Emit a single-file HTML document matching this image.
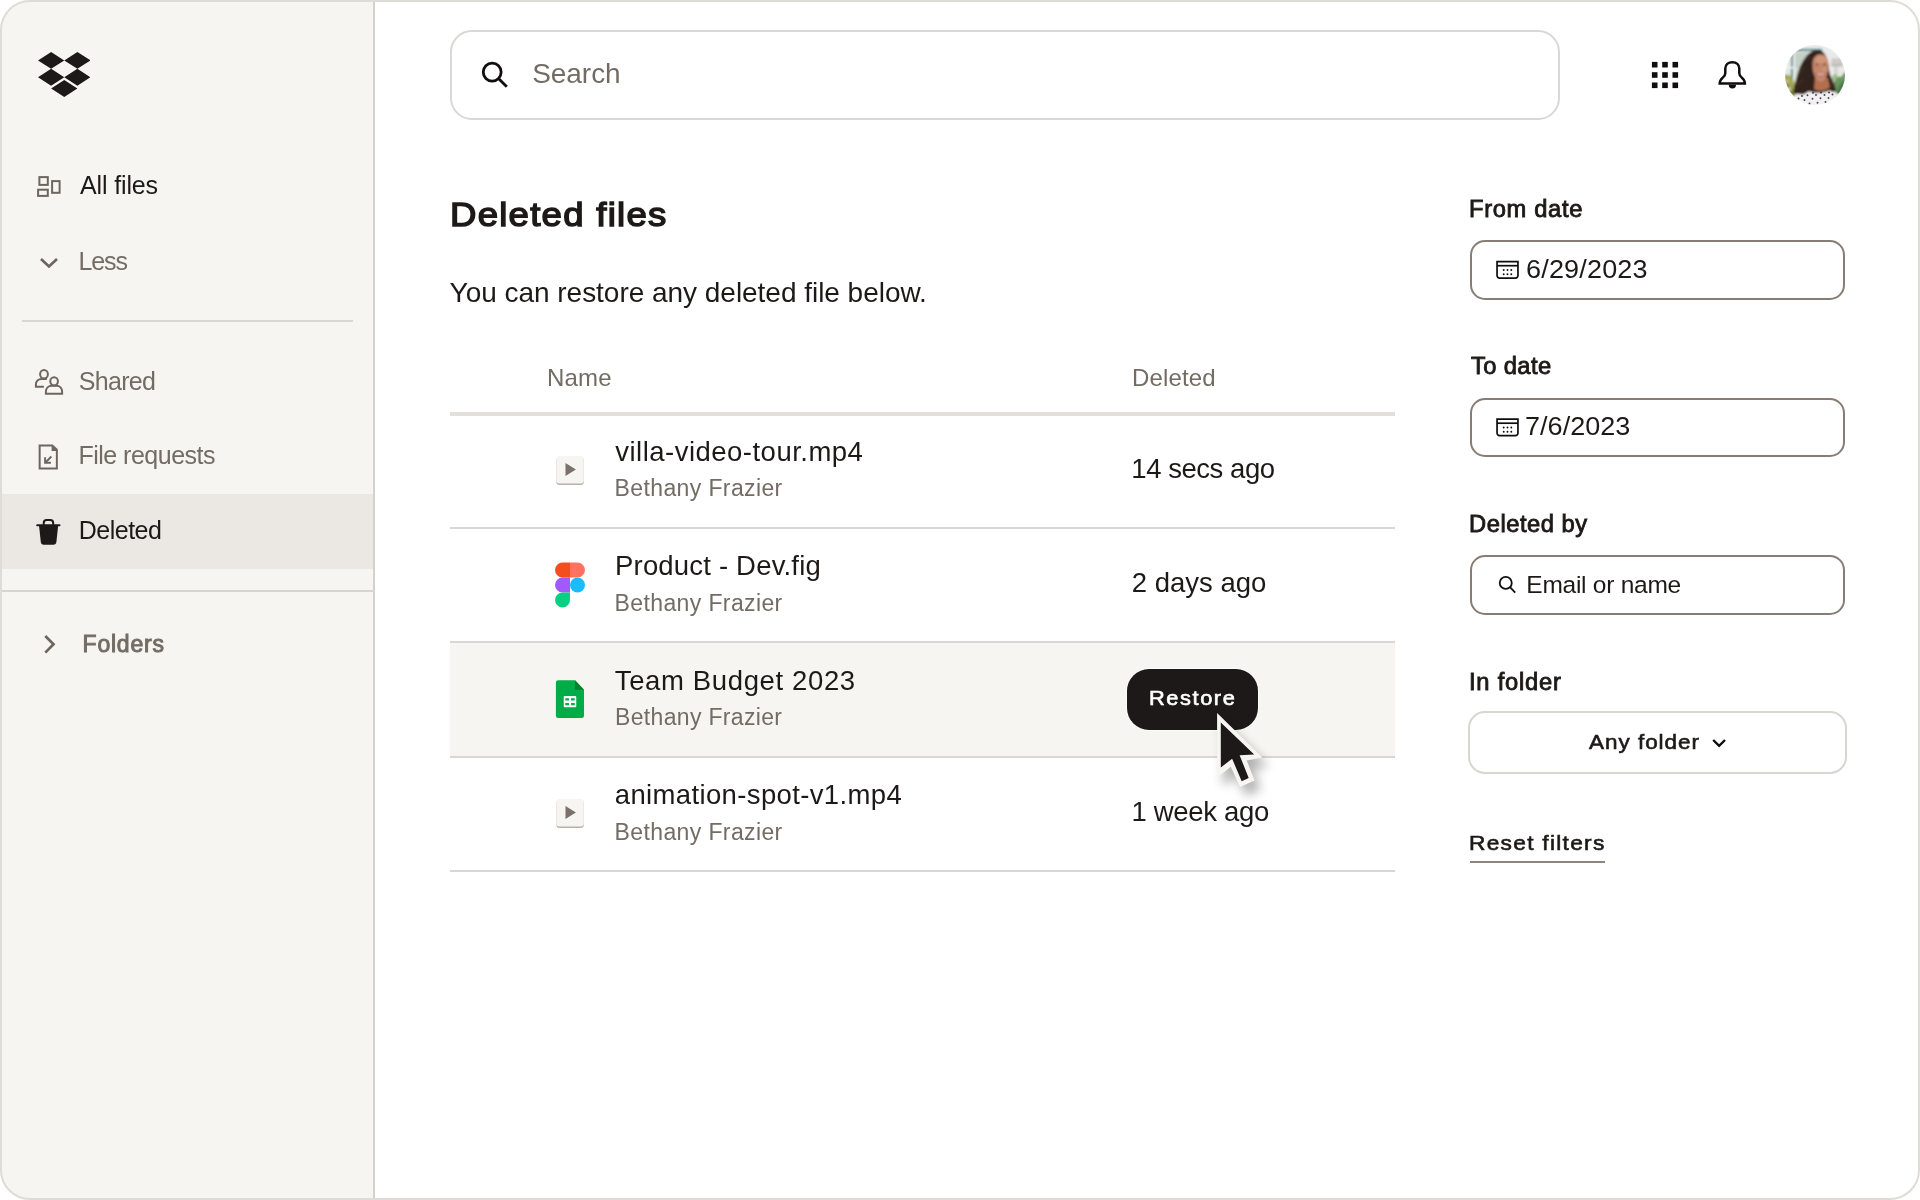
<!DOCTYPE html>
<html lang="en">
<head>
<meta charset="utf-8">
<title>Deleted files</title>
<style>
  html, body { margin: 0; padding: 0; }
  body {
    width: 1920px; height: 1200px; overflow: hidden; background: #ffffff;
    font-family: "Liberation Sans", sans-serif; color: #1e1919;
    -webkit-font-smoothing: antialiased;
  }
  .app {
    position: absolute; left: 0; top: 0; width: 1920px; height: 1200px;
    border-radius: 30px; overflow: hidden; background: #ffffff;
    will-change: transform; /* composited layer -> grayscale text AA */
  }
  .frame {
    position: absolute; left: 0; top: 0; width: 1920px; height: 1200px;
    box-sizing: border-box; border: 2px solid #dfdcd8; border-radius: 30px;
    pointer-events: none; z-index: 50;
  }
  .abs { position: absolute; }
  .t { position: absolute; white-space: nowrap; line-height: 1; margin: 0; padding: 0; }
  .gray { color: #736c64; }
  .b { font-weight: bold; }
  .m { font-weight: normal; -webkit-text-stroke: 0.62px currentColor; }

  /* ---------- sidebar ---------- */
  .sidebar {
    position: absolute; left: 0; top: 0; width: 373px; height: 1200px;
    background: #f7f5f2; border-right: 2px solid #d5d2ce;
  }
  .sidebar .sel {
    position: absolute; left: 0; top: 494px; width: 373px; height: 75px; background: #ebe8e4;
  }
  .sidebar .hr1 { position: absolute; left: 22px; top: 320px; width: 331px; height: 2px; background: #d9d7d3; }
  .sidebar .hr2 { position: absolute; left: 0; top: 590px; width: 375px; height: 2px; background: #d8d5d1; }
  .nav { font-size: 24px; }

  /* ---------- top bar ---------- */
  .search {
    position: absolute; left: 450px; top: 30px; width: 1110px; height: 90px;
    box-sizing: border-box; border: 2px solid #d9d8d6; border-radius: 22px; background: #fff;
  }
  .avatar { position: absolute; left: 1785px; top: 45px; width: 60px; height: 60px; border-radius: 50%; overflow: hidden; }

  /* ---------- main ---------- */
  h1.t { font-size: 35px; font-weight: normal; -webkit-text-stroke: 1.45px currentColor; }
  .thead-line { position: absolute; left: 450px; top: 412px; width: 945px; height: 4px; background: #e3e0dc; }
  .row-line { position: absolute; left: 450px; width: 945px; height: 2px; background: #d8d7d6; }
  .row-hl { position: absolute; left: 450px; top: 643px; width: 945px; height: 113px; background: #f7f5f2; }
  .fname { font-size: 26px; }
  .fsub { font-size: 23px; color: #736c64; }
  .fdel { font-size: 26px; }

  /* ---------- filters ---------- */
  .label { font-size: 23px; font-weight: normal; -webkit-text-stroke: 0.85px currentColor; }
  .input {
    position: absolute; left: 1470px; width: 375px; height: 60px; box-sizing: border-box;
    border: 2px solid #877d74; border-radius: 15px; background: #fff;
  }
  .select {
    position: absolute; left: 1468px; top: 711px; width: 379px; height: 63px; box-sizing: border-box;
    border: 2px solid #d9d5d1; border-radius: 17px; background: #fff;
  }
  .btn {
    position: absolute; left: 1127px; top: 669px; width: 131px; height: 60.5px;
    background: #1e1919; border-radius: 22px; box-shadow: 0 0 0 1px rgba(255,255,255,0.7);
  }
</style>
</head>
<body>
<div class="app">

  <!-- ================= SIDEBAR ================= -->
  <aside class="sidebar">
    <div class="sel"></div>
    <div class="hr1"></div>
    <div class="hr2"></div>

    <!-- logo -->
    <svg class="abs" style="left:37.8px;top:52.3px" width="52.5" height="44.9" viewBox="0 0 235.45 200" preserveAspectRatio="none">
      <path fill="#1e1919" d="m58.86 0-58.86 37.5 58.86 37.5 58.87-37.5zm117.73 0-58.86 37.5 58.86 37.5 58.86-37.5zm-176.59 112.5 58.86 37.5 58.87-37.5-58.87-37.5zm176.59-37.5-58.86 37.5 58.86 37.5 58.86-37.5zm-117.73 87.5 58.87 37.5 58.86-37.5-58.86-37.5z"/>
    </svg>


    <!-- sidebar icons (page coordinates) -->
    <svg class="abs" style="left:0;top:0" width="373" height="700" viewBox="0 0 373 700" fill="none">
      <!-- all files -->
      <g stroke="#6e665e" stroke-width="2">
        <rect x="39.4" y="177.1" width="8.4" height="7.8"/>
        <rect x="38.1" y="189.7" width="9.7" height="6.2"/>
        <rect x="52.1" y="181.1" width="7.5" height="11.7"/>
      </g>
      <!-- chevron down -->
      <polyline points="41,258.9 49,266.5 57,258.9" stroke="#6e665e" stroke-width="2.7"/>
      <!-- shared -->
      <g stroke="#6e665e" stroke-width="2">
        <ellipse cx="44" cy="374.3" rx="3.9" ry="4.3"/>
        <path d="M43.9 386.7H35.9V384.6C35.9 381.2 38.300 378.900 41.600 378.900H46.800"/>
        <ellipse cx="54.1" cy="381.3" rx="3.85" ry="4.1"/>
        <path d="M45.9 393.7V391.6C45.9 388.2 48.4 385.8 51.8 385.8H56.4C59.8 385.8 62.1 388.2 62.1 391.6V393.7Z"/>
      </g>
      <!-- file requests -->
      <g stroke="#6e665e" stroke-width="2">
        <path d="M39.65 445.45H52.3L56.85 449.8V468.55H39.65Z"/>
        <polyline points="45.1,457.2 45.1,462.8 50.9,462.8" stroke-width="1.9"/>
        <line x1="51.4" y1="456.5" x2="45.4" y2="462.5" stroke-width="1.9"/>
      </g>
      <path d="M51.6 445.5V451.1H57V449.8L52.3 445.5Z" fill="#6e665e"/>
      <!-- trash -->
      <g fill="#1e1919">
        <rect x="36.2" y="524.2" width="24.3" height="2.1" rx="1"/>
        <path d="M39 525.2H58.2L56.4 542C56.2 543.7 55.1 544.7 53.4 544.7H43.8C42.1 544.7 41 543.7 40.8 542Z"/>
      </g>
      <path d="M43.7 525V523A3 3 0 0 1 46.7 520H50.2A3 3 0 0 1 53.2 523V525" stroke="#1e1919" stroke-width="2"/>
      <!-- chevron right -->
      <polyline points="45.3,636 53.5,644.3 45.3,652.6" stroke="#6e665e" stroke-width="2.7"/>
    </svg>
    <nav class="nav">
      <span class="t" id="n1" style="left:79.9px;top:173.4px;font-size:25px;letter-spacing:-0.12px">All files</span>
      <span class="t gray" id="n2" style="left:78.6px;top:249.0px;font-size:25px;letter-spacing:-1.15px">Less</span>
      <span class="t gray" id="n3" style="left:78.7px;top:368.5px;font-size:25px;letter-spacing:-0.66px">Shared</span>
      <span class="t gray" id="n4" style="left:78.4px;top:443.2px;font-size:25px;letter-spacing:-0.50px">File requests</span>
      <span class="t" id="n5" style="left:78.7px;top:518.3px;font-size:25px;letter-spacing:-0.49px">Deleted</span>
      <span class="t gray m" id="n6" style="-webkit-text-stroke-width:0.95px;left:82.6px;top:632.5px;font-size:23px;letter-spacing:0.77px">Folders</span>
    </nav>
  </aside>

  <!-- ================= TOP BAR ================= -->
  <header>
    <div class="search"></div>
    <span class="t gray" id="s1" style="left:532.2px;top:59.5px;font-size:28px;letter-spacing:-0.05px">Search</span>
    
    <!-- search icon / app grid / bell -->
    <svg class="abs" style="left:470px;top:40px" width="1300" height="70" viewBox="470 40 1300 70" fill="none">
      <circle cx="492.2" cy="72.1" r="8.95" stroke="#0f0d0d" stroke-width="2.8"/>
      <line x1="498.5" y1="78.4" x2="506.800" y2="86.800" stroke="#0f0d0d" stroke-width="2.8"/>
      <g fill="#0f0d0d">
        <rect x="1651.9" y="61.9" width="5.6" height="5.6"/><rect x="1662.2" y="61.9" width="5.6" height="5.6"/><rect x="1672.5" y="61.9" width="5.6" height="5.6"/>
        <rect x="1651.9" y="72.2" width="5.6" height="5.6"/><rect x="1662.2" y="72.2" width="5.6" height="5.6"/><rect x="1672.5" y="72.2" width="5.6" height="5.6"/>
        <rect x="1651.9" y="82.5" width="5.6" height="5.6"/><rect x="1662.2" y="82.5" width="5.6" height="5.6"/><rect x="1672.5" y="82.5" width="5.6" height="5.6"/>
      </g>
      <path d="M1719.7 83.5C1719.7 80.4 1721.2 79 1722.8 77.6C1724.5 76.2 1725.3 75.300 1725.3 73.2V68.6C1725.300 64.700 1728.200 62.150 1732.300 62.150C1736.400 62.150 1739.300 64.700 1739.300 68.600V73.200C1739.300 75.300 1740.100 76.200 1741.800 77.600C1743.400 79 1744.900 80.400 1744.900 83.500Z" stroke="#0f0d0d" stroke-width="2.5" stroke-linejoin="miter"/>
      <path d="M1728.7 84.8A3.7 3.7 0 0 0 1736.1 84.8Z" fill="#0f0d0d"/>
    </svg>
    <div class="avatar">
      <svg width="60" height="60" viewBox="0 0 60 60">
        <defs>
          <filter id="bl" x="-10%" y="-10%" width="120%" height="120%"><feGaussianBlur stdDeviation="0.8"/></filter>
          <filter id="bl2" x="-10%" y="-10%" width="120%" height="120%"><feGaussianBlur stdDeviation="0.35"/></filter>
        </defs>
        <g filter="url(#bl)">
          <rect x="-5" y="-5" width="70" height="70" fill="#e9ebea"/>
          <!-- window -->
          <rect x="8" y="5" width="30" height="34" fill="#d3ddd4"/>
          <rect x="10" y="8" width="13" height="15" fill="#c3d0c6"/>
          <rect x="2" y="22" width="4" height="20" fill="#dfe6e0"/>
          <rect x="6" y="8" width="2.200" height="36" fill="#4f8288"/>
          <rect x="8.200" y="8" width="1.600" height="36" fill="#f4f6f5"/>
          <rect x="9" y="3.800" width="28" height="2.200" fill="#5b8b90"/>
          <rect x="0" y="22" width="10" height="1.500" fill="#f4f6f5"/>
          <!-- AC unit -->
          <rect x="46.300" y="13.300" width="11.500" height="7.400" fill="#cfcac6"/>
          <rect x="46.300" y="19.500" width="11.500" height="1.800" fill="#b5aea8"/>
          <rect x="49" y="21" width="4" height="9" fill="#d6d6cf"/>
          <!-- plants -->
          <path d="M-2 31C3 28 7 31 9 36C11 42 11 50 12 56H-2Z" fill="#a4a556"/>
          <path d="M0 40C4 38 8 42 9 47L8 54H0Z" fill="#7a8a44"/>
          <circle cx="4" cy="44" r="2.200" fill="#d8c6a8"/><circle cx="2.500" cy="36" r="1.500" fill="#c9cf8a"/>
          <path d="M48 40C50 33 54 31 57 28L62 27V50H47Z" fill="#6b9660"/>
          <path d="M53 43C55 38 58 36 62 35V50H51Z" fill="#4b7a48"/>
          <path d="M47.500 31C49 28.500 51.500 28.500 52.500 31C51.500 34.500 49 36 47.500 36Z" fill="#9ab97a"/>
          <path d="M54 30C55 27 57 26 59 27C58.500 30 56.500 32 54 32Z" fill="#e4ebe0"/>
          <!-- hair back -->
          <path d="M31.7 5C36 4.500 40.200 7 42.500 15C43.700 20 43.300 26 45.800 31.700C47.500 35.500 50.200 40 50.800 45.800L44 49.500L22 50.500L8.700 48.500C8.500 44 9.800 40 10.800 36.700C11.800 32.500 12.500 29.500 13.300 26.700C14.500 23 16 20 17.500 17.500C19.500 13.500 21.500 10.500 24.200 8.300C26.500 6.300 29 5.300 31.700 5Z" fill="#33211c"/>
          <!-- neck / chest -->
          <path d="M30 33H43L45 42C42 46 33 47 29 44Z" fill="#b26f50"/>
          <!-- face -->
          <path d="M27.500 20C27.500 12.500 31 9.300 35.500 9.300C40.500 9.300 43.500 13.500 43.500 21C43.500 29.500 40 36.800 35.800 36.800C31 36.800 27.500 28.500 27.500 20Z" fill="#c4866a"/>
          <ellipse cx="36" cy="14.500" rx="5.500" ry="4" fill="#d09677"/><ellipse cx="39.500" cy="24.500" rx="2.500" ry="2.200" fill="#cf9273"/>
          <!-- shirt -->
          <path d="M2 64C4 52 12 47.500 23 46C28 48.500 38 48.500 45 45.500C53 47 57 52 59 64Z" fill="#f2f0f0"/>
          <!-- hair front strands over shoulders -->
          <path d="M28.500 11C26.500 16 26.300 22 26.800 28C27.300 34 28.500 38 27 42C25.500 45.500 22 48 18 49.500L8.700 48.500C8.500 43 10 38 11.500 33C13 27 15 21 18 16C20.500 12 24 9.500 28.500 11Z" fill="#33211c"/>
          <path d="M43 18C44 25 44.500 29 46.500 33C48.500 37.500 50.500 41 50.800 45.800L46 47C45.500 42 44 38 43.300 34Z" fill="#33211c"/>
          <path d="M14 30C16 26 18 24 20 23M12 40C14 37 17 36 19 35M20 15C22 13 24 12 26 12M46 36C47 38 48 40 48.500 43" stroke="#4a342b" stroke-width="1.200" fill="none"/>
          <!-- smile -->
          <path d="M30.300 27.800C33.500 29.800 37.800 29.800 41 27.200C40 32.200 31.800 33 30.300 27.800Z" fill="#9d4152"/>
          <path d="M31.200 28.300C34 29.600 37.800 29.500 40.200 27.900C38.800 30.600 33 31 31.200 28.300Z" fill="#f8f1ee"/>
          <!-- eyes / glasses hint -->
          <ellipse cx="32" cy="19.800" rx="1.500" ry="0.700" fill="#4a2c22"/>
          <ellipse cx="39.300" cy="19.500" rx="1.500" ry="0.700" fill="#4a2c22"/>
        </g>
        <g fill="#2b2a38" opacity="0.880" filter="url(#bl2)">
          <circle cx="9" cy="58" r="0.950"/><circle cx="13.500" cy="53.500" r="0.950"/><circle cx="16" cy="59" r="0.950"/><circle cx="19.500" cy="55" r="0.950"/>
          <circle cx="22.500" cy="50.300" r="0.950"/><circle cx="24.500" cy="58.500" r="0.950"/><circle cx="27.500" cy="53.800" r="0.950"/><circle cx="31" cy="50" r="0.950"/>
          <circle cx="32.500" cy="57.800" r="0.950"/><circle cx="35.500" cy="53.300" r="0.950"/><circle cx="39.500" cy="50" r="0.950"/><circle cx="40.500" cy="57" r="0.950"/>
          <circle cx="43.500" cy="53" r="0.950"/><circle cx="47.500" cy="49.500" r="0.950"/><circle cx="48" cy="56" r="0.950"/><circle cx="51.500" cy="52.500" r="0.950"/>
          <circle cx="17" cy="51" r="0.950"/><circle cx="36" cy="47.500" r="0.950"/><circle cx="28" cy="47.800" r="0.950"/><circle cx="44" cy="47.500" r="0.950"/><circle cx="55" cy="56" r="0.950"/>
        </g>
      </svg>
    </div>
  </header>

  <!-- ================= MAIN ================= -->
  <main>
    <h1 class="t" id="h1" style="left:449.7px;top:198.1px;font-size:33.5px;letter-spacing:1.17px;transform:scaleX(1.0900);transform-origin:0 50%">Deleted files</h1>
    <p class="t" id="p1" style="left:449.6px;top:278.7px;font-size:28px;letter-spacing:-0.03px">You can restore any deleted file below.</p>

    <span class="t gray" id="th1" style="left:546.9px;top:366.0px;font-size:24px;letter-spacing:0.25px">Name</span>
    <span class="t gray" id="th2" style="left:1132.1px;top:366.0px;font-size:24px;letter-spacing:0.12px">Deleted</span>
    <div class="thead-line"></div>
    <div class="row-hl"></div>
    <div class="row-line" style="top:527px"></div>
    <div class="row-line" style="top:641px"></div>
    <div class="row-line" style="top:756px"></div>
    <div class="row-line" style="top:870px"></div>


    <!-- file type icons -->
    <svg class="abs" style="left:540px;top:440px" width="60" height="420" viewBox="540 440 60 420">
      <g transform="translate(0,0.00)">
        <rect x="556.5" y="457.3" width="27.3" height="27.6" rx="3" fill="#b9b0a6"/>
        <rect x="556.5" y="456" width="27.3" height="27.4" rx="2.8" fill="#f7f5f2"/>
        <path d="M565.5 463.1L575.9 469.6L565.5 476.1Z" fill="#7a716a"/>
      </g>
      <!-- figma -->
      <g>
        <path d="M555 570A7.5 7.5 0 0 1 562.5 562.5H570V577.5H562.5A7.500 7.500 0 0 1 555 570Z" fill="#f24e1e"/>
        <path d="M570 562.5H577.5A7.500 7.500 0 0 1 577.500 577.5H570Z" fill="#ff7262"/>
        <path d="M555 585A7.500 7.500 0 0 1 562.500 577.5H570V592.5H562.5A7.500 7.500 0 0 1 555 585Z" fill="#a259ff"/>
        <circle cx="577.5" cy="585" r="7.5" fill="#1abcfe"/>
        <path d="M555 600A7.500 7.500 0 0 1 562.500 592.5H570V600A7.500 7.500 0 0 1 555 600Z" fill="#0acf83"/>
      </g>
      <!-- sheets -->
      <g>
        <path d="M558.1 680.3H575L584 689.8V715.800A2.200 2.200 0 0 1 581.800 718H558.100A2.200 2.200 0 0 1 555.900 715.800V682.500A2.200 2.200 0 0 1 558.100 680.300Z" fill="#00ac47"/>
        <path d="M575 680.3L584 689.8H575Z" fill="#00832d"/>
        <rect x="563.75" y="696" width="12.5" height="11.25" rx="0.9" fill="#ffffff"/>
        <g fill="#00ac47"><rect x="565.25" y="698.2" width="3.8" height="2.3" rx="0.4"/><rect x="571" y="698.200" width="3.800" height="2.300" rx="0.400"/><rect x="565.250" y="702.900" width="3.800" height="2.300" rx="0.400"/><rect x="571" y="702.900" width="3.800" height="2.300" rx="0.400"/></g>
      </g>
      <g transform="translate(0,343.00)">
        <rect x="556.5" y="457.3" width="27.3" height="27.6" rx="3" fill="#b9b0a6"/>
        <rect x="556.5" y="456" width="27.3" height="27.4" rx="2.8" fill="#f7f5f2"/>
        <path d="M565.5 463.1L575.9 469.6L565.5 476.1Z" fill="#7a716a"/>
      </g>
    </svg>
    <span class="t fname" id="f1" style="left:615.3px;top:437.9px;font-size:27.5px;letter-spacing:0.48px">villa-video-tour.mp4</span>
    <span class="t fsub" id="u1" style="left:614.6px;top:477.4px;font-size:23px;letter-spacing:0.38px">Bethany Frazier</span>
    <span class="t fdel" id="d1" style="left:1131.3px;top:454.8px;font-size:27.5px;letter-spacing:-0.45px">14 secs ago</span>

    <span class="t fname" id="f2" style="left:615.0px;top:552.4px;font-size:27.5px;letter-spacing:0.19px">Product - Dev.fig</span>
    <span class="t fsub" id="u2" style="left:614.6px;top:591.8px;font-size:23px;letter-spacing:0.38px">Bethany Frazier</span>
    <span class="t fdel" id="d2" style="left:1131.7px;top:569.2px;font-size:27.5px;letter-spacing:0.01px">2 days ago</span>

    <span class="t fname" id="f3" style="left:614.8px;top:666.5px;font-size:27.5px;letter-spacing:0.63px">Team Budget 2023</span>
    <span class="t fsub" id="u3" style="left:615.0px;top:706.4px;font-size:23px;letter-spacing:0.33px">Bethany Frazier</span>
    <div class="btn"></div>
    <span class="t m" id="bt" style="left:1148.7px;top:688.3px;font-size:20px;color:#fff;letter-spacing:1.45px;transform:scaleX(1.0900);transform-origin:0 50%">Restore</span>


    <!-- mouse cursor -->
    <svg class="abs" style="left:1190px;top:690px;z-index:20" width="120" height="140" viewBox="1190 690 120 140">
      <defs><filter id="cs" x="-50%" y="-50%" width="200%" height="200%"><feGaussianBlur stdDeviation="5.5"/></filter></defs>
      <path d="M1217.100 712.900V777.500L1230.800 766.700L1240 787.100L1254.600 780.400L1246.700 760.400L1262.500 757.500Z" fill="#000" opacity="0.3" transform="translate(6,9)" filter="url(#cs)"/>
      <path d="M1217.100 712.900V777.500L1230.800 766.700L1240 787.100L1254.600 780.400L1246.700 760.400L1262.500 757.500Z" fill="#f7f5f2"/>
      <path d="M1220.800 722.500V767.500L1232.100 758.700L1241.700 781.200L1248.700 777.900L1239.600 755.200L1254.200 754.600Z" fill="#1e1919"/>
    </svg>
    <span class="t fname" id="f4" style="left:614.8px;top:781.0px;font-size:27.5px;letter-spacing:0.36px">animation-spot-v1.mp4</span>
    <span class="t fsub" id="u4" style="left:614.6px;top:820.6px;font-size:23px;letter-spacing:0.38px">Bethany Frazier</span>
    <span class="t fdel" id="d4" style="left:1131.5px;top:798.1px;font-size:27.5px;letter-spacing:-0.33px">1 week ago</span>
  </main>

  <!-- ================= FILTERS ================= -->
  <aside class="filters">

    <span class="t label" id="l1" style="left:1469.1px;top:197.6px;font-size:23px;letter-spacing:0.66px;transform:scaleX(1.0300);transform-origin:0 50%">From date</span>
    <div class="input" style="top:240px"></div>
    <span class="t" id="i1" style="left:1526.2px;top:256.6px;font-size:25px;letter-spacing:0.17px;transform:scaleX(1.0800);transform-origin:0 50%">6/29/2023</span>

    <span class="t label" id="l2" style="left:1470.5px;top:355.1px;font-size:23px;letter-spacing:0.38px;transform:scaleX(1.0300);transform-origin:0 50%">To date</span>
    <div class="input" style="top:398px;height:59px"></div>
    <span class="t" id="i2" style="left:1525.4px;top:413.7px;font-size:25px;letter-spacing:0.03px;transform:scaleX(1.0800);transform-origin:0 50%">7/6/2023</span>

    <span class="t label" id="l3" style="left:1469.1px;top:513.1px;font-size:23px;letter-spacing:0.53px;transform:scaleX(1.0300);transform-origin:0 50%">Deleted by</span>
    <div class="input" style="top:555px"></div>
    <span class="t" id="i3" style="left:1526.3px;top:572.5px;font-size:24.5px;letter-spacing:-0.25px">Email or name</span>

    <span class="t label" id="l4" style="left:1468.9px;top:670.6px;font-size:23px;letter-spacing:0.75px;transform:scaleX(1.0300);transform-origin:0 50%">In folder</span>
    <div class="select"></div>
    <span class="t m" id="sf" style="left:1588.9px;top:730.5px;font-size:21px;letter-spacing:0.92px;transform:scaleX(1.0700);transform-origin:0 50%">Any folder</span>

    <span class="t m" id="rf" style="left:1468.7px;top:832.0px;font-size:21px;letter-spacing:1.20px;transform:scaleX(1.0800);transform-origin:0 50%">Reset filters</span>
    <div class="abs" style="left:1470px;top:860.5px;width:135px;height:2px;background:#8f857c"></div>

    <!-- filter field icons -->
    <svg class="abs" style="left:1490px;top:250px" width="250" height="510" viewBox="1490 250 250 510" fill="none">
      <g id="cal" stroke="#0f0d0d" stroke-width="1.7">
        <path d="M1497.05 261.55H1517.95V275.600A2.550 2.550 0 0 1 1515.400 278.150H1499.600A2.550 2.550 0 0 1 1497.050 275.600Z"/>
        <line x1="1497" y1="265.700" x2="1518" y2="265.700"/>
        <g fill="#0f0d0d" stroke="none">
          <circle cx="1503.700" cy="270" r="0.950"/><circle cx="1507.500" cy="270" r="0.950"/><circle cx="1511.300" cy="270" r="0.950"/>
          <circle cx="1503.700" cy="274.200" r="0.950"/><circle cx="1507.500" cy="274.200" r="0.950"/><circle cx="1511.300" cy="274.200" r="0.950"/>
        </g>
      </g>
      <use href="#cal" y="157.500"/>
      <circle cx="1505.750" cy="582.900" r="6" stroke="#0f0d0d" stroke-width="1.800"/>
      <line x1="1510" y1="587.200" x2="1515.200" y2="592.600" stroke="#0f0d0d" stroke-width="1.800"/>
      <polyline points="1713.200,740 1719.100,745.900 1725,740" stroke="#0f0d0d" stroke-width="2.400"/>
    </svg>
  </aside>

</div>
<div class="frame"></div>
</body>
</html>
